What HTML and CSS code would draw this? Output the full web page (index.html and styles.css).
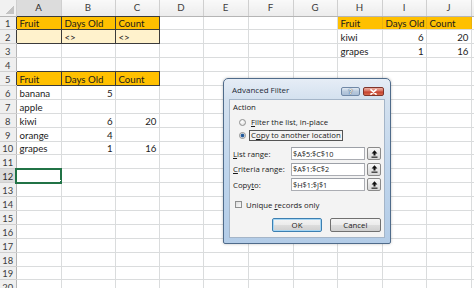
FILE: index.html
```html
<!DOCTYPE html>
<html>
<head>
<meta charset="utf-8">
<title>Advanced Filter</title>
<link rel="stylesheet" href="styles.css">
</head>
<body>
<div class="sheet">
<table class="grid">
<colgroup>
<col class="w16"><col class="w45"><col class="w54"><col class="w44"><col class="w44"><col class="w45"><col class="w45"><col class="w44"><col class="w45"><col class="w44"><col class="w45"><col class="w30">
</colgroup>
<thead>
<tr class="hdr"><th class="corner"></th><th class="sel bb">A</th><th class="bb">B</th><th class="bb">C</th><th>D</th><th>E</th><th>F</th><th>G</th><th>H</th><th>I</th><th>J</th><th></th></tr>
</thead>
<tbody>
<tr><th class="br">1</th><td class="or bx">Fruit</td><td class="or bx">Days Old</td><td class="or bx">Count</td><td></td><td></td><td></td><td></td><td class="or">Fruit</td><td class="or">Days Old</td><td class="or">Count</td><td></td></tr>
<tr><th class="br">2</th><td class="lt bx"></td><td class="lt bx">&lt;&gt;</td><td class="lt bx">&lt;&gt;</td><td></td><td></td><td></td><td></td><td>kiwi</td><td class="n">6</td><td class="n">20</td><td></td></tr>
<tr><th>3</th><td></td><td></td><td></td><td></td><td></td><td></td><td></td><td>grapes</td><td class="n">1</td><td class="n">16</td><td></td></tr>
<tr><th>4</th><td class="bb"></td><td class="bb"></td><td class="bb"></td><td></td><td></td><td></td><td></td><td></td><td></td><td></td><td></td></tr>
<tr><th class="br">5</th><td class="or bx">Fruit</td><td class="or bx">Days Old</td><td class="or bx">Count</td><td></td><td></td><td></td><td></td><td></td><td></td><td></td><td></td></tr>
<tr><th>6</th><td>banana</td><td class="n">5</td><td></td><td></td><td></td><td></td><td></td><td></td><td></td><td></td><td></td></tr>
<tr><th>7</th><td>apple</td><td></td><td></td><td></td><td></td><td></td><td></td><td></td><td></td><td></td><td></td></tr>
<tr><th>8</th><td>kiwi</td><td class="n">6</td><td class="n">20</td><td></td><td></td><td></td><td></td><td></td><td></td><td></td><td></td></tr>
<tr><th>9</th><td>orange</td><td class="n">4</td><td></td><td></td><td></td><td></td><td></td><td></td><td></td><td></td><td></td></tr>
<tr><th>10</th><td>grapes</td><td class="n">1</td><td class="n">16</td><td></td><td></td><td></td><td></td><td></td><td></td><td></td><td></td></tr>
<tr><th>11</th><td></td><td></td><td></td><td></td><td></td><td></td><td></td><td></td><td></td><td></td><td></td></tr>
<tr><th class="sel">12</th><td class="cur"></td><td></td><td></td><td></td><td></td><td></td><td></td><td></td><td></td><td></td><td></td></tr>
<tr><th>13</th><td></td><td></td><td></td><td></td><td></td><td></td><td></td><td></td><td></td><td></td><td></td></tr>
<tr><th>14</th><td></td><td></td><td></td><td></td><td></td><td></td><td></td><td></td><td></td><td></td><td></td></tr>
<tr><th>15</th><td></td><td></td><td></td><td></td><td></td><td></td><td></td><td></td><td></td><td></td><td></td></tr>
<tr><th>16</th><td></td><td></td><td></td><td></td><td></td><td></td><td></td><td></td><td></td><td></td><td></td></tr>
<tr><th>17</th><td></td><td></td><td></td><td></td><td></td><td></td><td></td><td></td><td></td><td></td><td></td></tr>
<tr><th>18</th><td></td><td></td><td></td><td></td><td></td><td></td><td></td><td></td><td></td><td></td><td></td></tr>
<tr><th>19</th><td></td><td></td><td></td><td></td><td></td><td></td><td></td><td></td><td></td><td></td><td></td></tr>
<tr><th>20</th><td></td><td></td><td></td><td></td><td></td><td></td><td></td><td></td><td></td><td></td><td></td></tr>
</tbody>
</table>
</div>

<div class="dlg">
  <div class="titlebar">
    <span class="title">Advanced Filter</span>
    <span class="cap help">?</span>
    <span class="cap close"><svg width="7" height="6" viewBox="0 0 7 6"><path d="M1 0.8 L6 5.2 M6 0.8 L1 5.2" stroke="#fff" stroke-width="1.6" stroke-linecap="round"/></svg></span>
  </div>
  <div class="client">
    <div class="group">Action</div>
    <div class="opts">
      <div class="opt"><span class="radio"></span><span class="otext"><u>F</u>ilter the list, in-place</span></div>
      <div class="opt"><span class="radio on"></span><span class="otext focus">C<u>o</u>py to another location</span></div>
    </div>
    <div class="fields">
      <div class="field"><span class="lbl"><u>L</u>ist range:</span><span class="inp">$A$5:$C$10</span><span class="pick"><svg width="7" height="8" viewBox="0 0 7 8"><path d="M3.5 0.3 L0.6 3.4 H2.5 V5.6 H4.5 V3.4 H6.4 Z" fill="#111"/><rect x="0.5" y="6.6" width="6" height="1.1" fill="#111"/></svg></span></div>
      <div class="field"><span class="lbl"><u>C</u>riteria range:</span><span class="inp">$A$1:$C$2</span><span class="pick"><svg width="7" height="8" viewBox="0 0 7 8"><path d="M3.5 0.3 L0.6 3.4 H2.5 V5.6 H4.5 V3.4 H6.4 Z" fill="#111"/><rect x="0.5" y="6.6" width="6" height="1.1" fill="#111"/></svg></span></div>
      <div class="field"><span class="lbl">Copy <u>t</u>o:</span><span class="inp">$H$1:$J$1</span><span class="pick"><svg width="7" height="8" viewBox="0 0 7 8"><path d="M3.5 0.3 L0.6 3.4 H2.5 V5.6 H4.5 V3.4 H6.4 Z" fill="#111"/><rect x="0.5" y="6.6" width="6" height="1.1" fill="#111"/></svg></span></div>
    </div>
    <div class="chk"><span class="box"></span><span>Unique <u>r</u>ecords only</span></div>
    <div class="btns"><span class="btn def">OK</span><span class="btn">Cancel</span></div>
  </div>
</div>
</body>
</html>
```

FILE: styles.css
```css
html, body {
  margin: 0;
  padding: 0;
}
body {
  width: 474px;
  height: 288px;
  overflow: hidden;
  background: #fff;
  position: relative;
  font-family: Lato, "Liberation Sans", sans-serif;
}
.sheet {
  width: 474px;
  height: 288px;
  overflow: hidden;
}
.grid {
  border-collapse: collapse;
  table-layout: fixed;
  width: 501px;
}
.w16 { width: 16px; }
.w30 { width: 30px; }
.w44 { width: 44px; }
.w45 { width: 45px; }
.w54 { width: 54px; }

.grid tr { height: 13.9px; }
.grid tr.hdr { height: 16px; }

.grid td, .grid th {
  padding: 0 2px 0 3px;
  border: none;
  border-right: 1px solid #dadcdd;
  border-bottom: 1px solid #dadcdd;
  font-size: 9.7px;
  line-height: 11px;
  font-weight: normal;
  color: #1b1b1b;
  white-space: nowrap;
  overflow: hidden;
  vertical-align: bottom;
  text-align: left;
}
.grid thead th {
  background: linear-gradient(#f9f9f9, #ececec);
  border-right-color: #cfcfcf;
  border-bottom-color: #b5b5b5;
  color: #3c3c3c;
  text-align: center;
  vertical-align: middle;
  padding: 0;
}
.grid tbody th {
  background: #efefef;
  border-right-color: #b5b5b5;
  border-bottom-color: #d0d0d0;
  color: #3c3c3c;
  text-align: center;
  padding: 0;
  font-size: 9.4px;
}
.grid th.corner {
  background: linear-gradient(135deg, transparent 50%, #c3c3c3 50%) no-repeat right 2px bottom 2px / 9px 9px, #f1f1f1;
}
.grid th.sel, .grid thead th.sel {
  background: #dcdcdc;
  color: #2a2a2a;
}
.grid td.n { text-align: right; padding-right: 2px; }
.grid td.or { background: #ffc000; border-right-color: #e9b10c; }
.grid td.lt { background: #fff2cc; }
.grid td.bx, .grid td.or.bx, .grid td.lt.bx {
  border-right-color: #3b3b3b;
  border-bottom-color: #3b3b3b;
}
.grid .bb, .grid thead th.bb { border-bottom-color: #3b3b3b; }
.grid tbody th.br { border-right-color: #3b3b3b; }

.grid td.cur {
  position: relative;
  outline: 2px solid #217346;
  outline-offset: -1px;
}
.grid td.cur::after {
  content: "";
  position: absolute;
  right: -3px;
  bottom: -3px;
  width: 3px;
  height: 3px;
  background: #217346;
  border: 1px solid #fff;
}

/* dialog */
.dlg {
  position: absolute;
  left: 223px;
  top: 78px;
  width: 168px;
  height: 166px;
  box-sizing: border-box;
  border: 1px solid #4f6b8a;
  border-radius: 5px 5px 2px 2px;
  background: linear-gradient(180deg, #e6edf6 0%, #d4e1ef 12%, #bfd5ec 55%, #b3cce7 100%);
  padding: 0 5px 5px 5px;
  display: flex;
  flex-direction: column;
  font-family: "Open Sans", "Noto Sans", sans-serif;
  font-size: 7.8px;
  color: #1a1a1a;
  box-shadow: 0 0 3px rgba(0, 0, 0, 0.25);
}
.titlebar {
  height: 20px;
  display: flex;
  align-items: flex-start;
  flex: none;
}
.title {
  flex: 1;
  padding: 6px 0 0 3px;
  line-height: 10px;
  font-size: 8px;
  color: #1e2a36;
}
.cap {
  margin-top: 8px;
  height: 9px;
  box-sizing: border-box;
  border-radius: 2px;
  display: flex;
  align-items: center;
  justify-content: center;
}
.help {
  width: 19px;
  margin-right: 3px;
  border: 1px solid #7088a6;
  background: linear-gradient(#e2eaf3, #b9cadd 50%, #a9bed6);
  color: #fff;
  font-family: "Liberation Sans", sans-serif;
  font-weight: bold;
  font-size: 7px;
  line-height: 7px;
  text-shadow: 0 0 1px #30425a, 0 0 1px #30425a;
}
.close {
  width: 21px;
  margin-right: 1px;
  border: 1px solid #80342a;
  background: linear-gradient(#eab0a4, #d8705e 45%, #c5402e 55%, #d66a4c);
}
.client {
  height: 139px;
  box-sizing: border-box;
  border: 1px solid #a4b5c8;
  background: #f3f3f3;
  padding: 0 3px;
}
.group {
  height: 15px;
  line-height: 15px;
}
.opts {
  margin-top: 1px;
}
.opt {
  height: 12.8px;
  display: flex;
  align-items: center;
  padding-left: 6px;
}
.radio {
  width: 7px;
  height: 7px;
  box-sizing: border-box;
  border-radius: 50%;
  border: 1px solid #8e8f8f;
  background: radial-gradient(circle at 40% 35%, #fff, #d9d9d9);
  margin-right: 3px;
  flex: none;
}
.radio.on {
  background: radial-gradient(circle, #1d4f8a 0, #2a64a8 1.6px, #e6e6e6 2.2px, #fafafa);
}
.otext {
  border: 1px solid transparent;
  padding: 0 1px;
  line-height: 9px;
}
.otext.focus {
  border-color: #555;
}
.fields {
  margin-top: 5.7px;
  display: flex;
  flex-direction: column;
  gap: 2.5px;
}
.field {
  height: 13px;
  display: flex;
  align-items: stretch;
}
.lbl {
  width: 58px;
  flex: none;
  display: flex;
  align-items: center;
}
.inp {
  flex: 1;
  box-sizing: border-box;
  background: #fff;
  border: 1px solid #abadb3;
  border-top-color: #9ca0a7;
  padding-left: 1px;
  font-size: 7.3px;
  display: flex;
  align-items: center;
  color: #222;
}
.pick {
  width: 14px;
  flex: none;
  margin-left: 2.5px;
  box-sizing: border-box;
  border: 1px solid #8a8a8a;
  border-radius: 2px;
  background: linear-gradient(#f8f8f8, #e6e6e6 50%, #d9d9d9);
  display: flex;
  align-items: center;
  justify-content: center;
}
.chk {
  margin-top: 7.7px;
  height: 12px;
  display: flex;
  align-items: center;
  padding-left: 2px;
}
.box {
  width: 7px;
  height: 7px;
  box-sizing: border-box;
  border: 1px solid #8e8f8f;
  background: linear-gradient(135deg, #dcdcdc, #fbfbfb);
  margin-right: 4px;
}
.btns {
  margin-top: 7.3px;
  display: flex;
  justify-content: flex-end;
  gap: 7.6px;
}
.btn {
  height: 13.4px;
  box-sizing: border-box;
  border: 1px solid #707070;
  border-radius: 2px;
  background: linear-gradient(#f4f4f4, #ebebeb 50%, #dddddd 50%, #cfcfcf);
  display: flex;
  align-items: center;
  justify-content: center;
  width: 51.4px;
}
.btn.def {
  width: 50px;
  border-color: #3c7fb1;
  box-shadow: inset 0 0 0 1px #a6d6f4;
}
```
